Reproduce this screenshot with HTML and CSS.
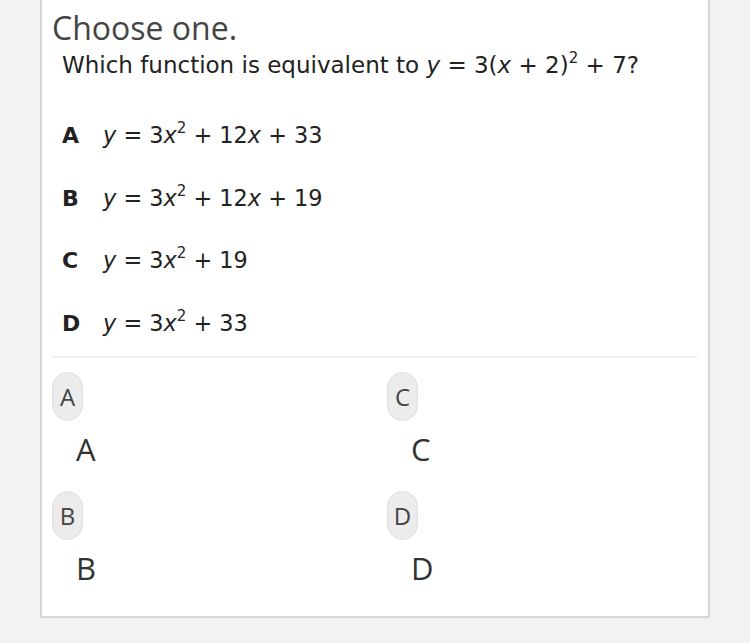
FILE: index.html
```html
<!DOCTYPE html>
<html>
<head>
<meta charset="utf-8">
<link rel="stylesheet" href="styles.css">
</head>
<body>
<div class="card">
  <div class="title">Choose one.</div>
  <div class="question">Which function is equivalent to <span class="m"><i>y</i> = 3(<i>x</i> + 2)<sup>2</sup> + 7</span>?</div>
  <div class="options">
    <div class="opt"><span class="key">A</span><span class="m"><i>y</i> = 3<i>x</i><sup>2</sup> + 12<i>x</i> + 33</span></div>
    <div class="opt"><span class="key">B</span><span class="m"><i>y</i> = 3<i>x</i><sup>2</sup> + 12<i>x</i> + 19</span></div>
    <div class="opt"><span class="key">C</span><span class="m"><i>y</i> = 3<i>x</i><sup>2</sup> + 19</span></div>
    <div class="opt"><span class="key">D</span><span class="m"><i>y</i> = 3<i>x</i><sup>2</sup> + 33</span></div>
  </div>
  <div class="divider"></div>
  <div class="choices">
    <div class="choice"><span class="pill">A</span><span class="label">A</span></div>
    <div class="choice"><span class="pill">C</span><span class="label">C</span></div>
    <div class="choice"><span class="pill">B</span><span class="label">B</span></div>
    <div class="choice"><span class="pill">D</span><span class="label">D</span></div>
  </div>
</div>
</body>
</html>
```
FILE: styles.css
```css
html, body {
  margin: 0;
  padding: 0;
  background: #f2f2f2;
}
body {
  height: 643px;
  overflow: hidden;
}
.card {
  margin-left: 40px;
  height: 616px;
  background: #fff;
  border: 2px solid #d6d6d6;
  border-top: none;
  padding: 0 0 0 10px;
  box-sizing: content-box;
  width: 656px;
}
.title {
  font-family: "Open Sans", sans-serif;
  font-size: 32px;
  color: #444;
  line-height: 40px;
  padding-top: 8px;
}
.question {
  font-family: "DejaVu Sans", Verdana, sans-serif;
  font-size: 23px;
  color: #222;
  line-height: 30px;
  padding-left: 10px;
  margin-top: 2px;
}
.m {
  font-family: "DejaVu Sans", Verdana, sans-serif;
}
.m i {
  font-style: italic;
}
sup {
  font-size: 15px;
  line-height: 0;
  vertical-align: 10px;
}
.options {
  padding-left: 10px;
  margin-top: 40px;
}
.opt {
  display: flex;
  align-items: baseline;
  height: 62.5px;
  font-family: "DejaVu Sans", Verdana, sans-serif;
  font-size: 22.4px;
  color: #222;
  line-height: 30px;
}
.key {
  font-weight: bold;
  font-size: 22px;
  width: 41px;
}
.divider {
  height: 2px;
  background: #f0f0f0;
  margin: -14px 10px 0 0;
}
.choices {
  display: grid;
  grid-template-columns: 335px 1fr;
  margin-top: 14px;
}
.choice {
  display: flex;
  flex-direction: column;
  align-items: flex-start;
  height: 119px;
}
.pill {
  font-family: "Open Sans", sans-serif;
  font-size: 24px;
  color: #444;
  background: #ececec;
  border: 1px solid #dedede;
  border-radius: 16px;
  width: 31px;
  height: 49px;
  box-sizing: border-box;
  display: flex;
  align-items: center;
  justify-content: center;
}
.label {
  font-family: "Open Sans", sans-serif;
  font-size: 31px;
  color: #333;
  line-height: 40px;
  margin-top: 8px;
  padding-left: 24px;
}
```
